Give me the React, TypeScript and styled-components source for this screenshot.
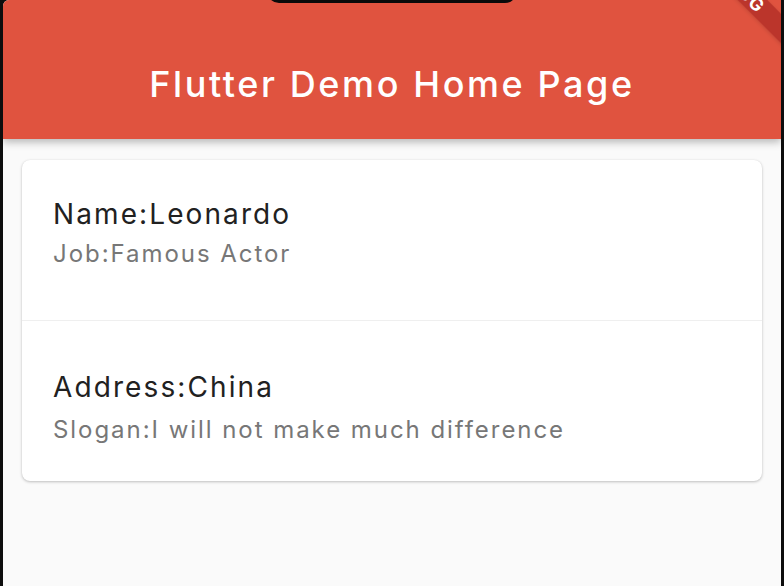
import React from 'react'
import styled, {createGlobalStyle} from 'styled-components'

const GlobalStyle = createGlobalStyle`
  html, body {
    margin: 0;
    padding: 0;
    background: #0d0d0d;
  }
  #root {
    width: 784px;
    height: 586px;
    overflow: hidden;
  }
`

type Entry = {
    title: string
    subtitle: string
    padTop: number
    gap: number
}

const entries: Entry[] = [
    {title: 'Name:Leonardo', subtitle: 'Job:Famous Actor', padTop: 37, gap: 8},
    {title: 'Address:China', subtitle: 'Slogan:I will not make much difference', padTop: 49, gap: 11},
]

const Frame = styled.div`
  display: flex;
  width: 784px;
  height: 586px;
  padding: 0 3px 0 3px;
  box-sizing: border-box;
  background: #0d0d0d;
`

const Screen = styled.div`
  position: relative;
  flex: 1;
  display: flex;
  flex-direction: column;
  overflow: hidden;
  background: #fafafa;
  border-top-left-radius: 6px;
  font-family: Inter, "Noto Sans", sans-serif;
`

const Notch = styled.div`
  position: absolute;
  top: -10px;
  left: 264px;
  width: 250px;
  height: 13px;
  background: #0a0a0a;
  border-radius: 0 0 12px 12px;
  z-index: 3;
`

const DebugBanner = styled.div`
  position: absolute;
  left: 615px;
  top: -25px;
  width: 240px;
  height: 21px;
  transform: rotate(45deg);
  background: rgba(150, 24, 24, 0.5);
  color: #fff;
  font-weight: 700;
  font-size: 18px;
  line-height: 21px;
  text-align: center;
  letter-spacing: 1px;
  z-index: 4;
  box-shadow: 0 1px 4px rgba(0, 0, 0, 0.12);
`

const AppBar = styled.header`
  position: relative;
  z-index: 2;
  flex: 0 0 139px;
  display: flex;
  align-items: flex-end;
  justify-content: center;
  padding-bottom: 33px;
  box-sizing: border-box;
  background: #e0533f;
  box-shadow: 0 3px 8px rgba(0, 0, 0, 0.28);
`

const Title = styled.h1`
  margin: 0;
  color: #fff;
  font-size: 36px;
  line-height: 44px;
  font-weight: 500;
  letter-spacing: 2.6px;
`

const Body = styled.main`
  flex: 1;
  padding: 21px 19px 0 19px;
`

const Card = styled.section`
  display: flex;
  flex-direction: column;
  background: #fff;
  border-radius: 8px;
  overflow: hidden;
  box-shadow: 0 1px 3px rgba(0, 0, 0, 0.24), 0 0 1px rgba(0, 0, 0, 0.08);
`

const Row = styled.div<{ $padTop: number }>`
  display: flex;
  flex-direction: column;
  height: 160px;
  box-sizing: border-box;
  padding: ${p => p.$padTop}px 30px 0 31px;
`

const Divider = styled.hr`
  margin: 0;
  border: none;
  height: 1px;
  background: #efefef;
`

const RowTitle = styled.div`
  color: #212121;
  font-size: 28px;
  line-height: 34px;
  letter-spacing: 2.1px;
`

const RowSubtitle = styled.div<{ $gap: number }>`
  margin-top: ${p => p.$gap}px;
  color: #777;
  font-size: 24px;
  line-height: 30px;
  letter-spacing: 1.95px;
`

export default function App() {
    return (
        <>
            <GlobalStyle/>
            <Frame>
                <Screen>
                    <Notch/>
                    <DebugBanner>DEBUG</DebugBanner>
                    <AppBar>
                        <Title>Flutter Demo Home Page</Title>
                    </AppBar>
                    <Body>
                        <Card>
                            {entries.map((e, i) => (
                                <React.Fragment key={e.title}>
                                    {i > 0 && <Divider/>}
                                    <Row $padTop={e.padTop}>
                                        <RowTitle>{e.title}</RowTitle>
                                        <RowSubtitle $gap={e.gap}>{e.subtitle}</RowSubtitle>
                                    </Row>
                                </React.Fragment>
                            ))}
                        </Card>
                    </Body>
                </Screen>
            </Frame>
        </>
    )
}
